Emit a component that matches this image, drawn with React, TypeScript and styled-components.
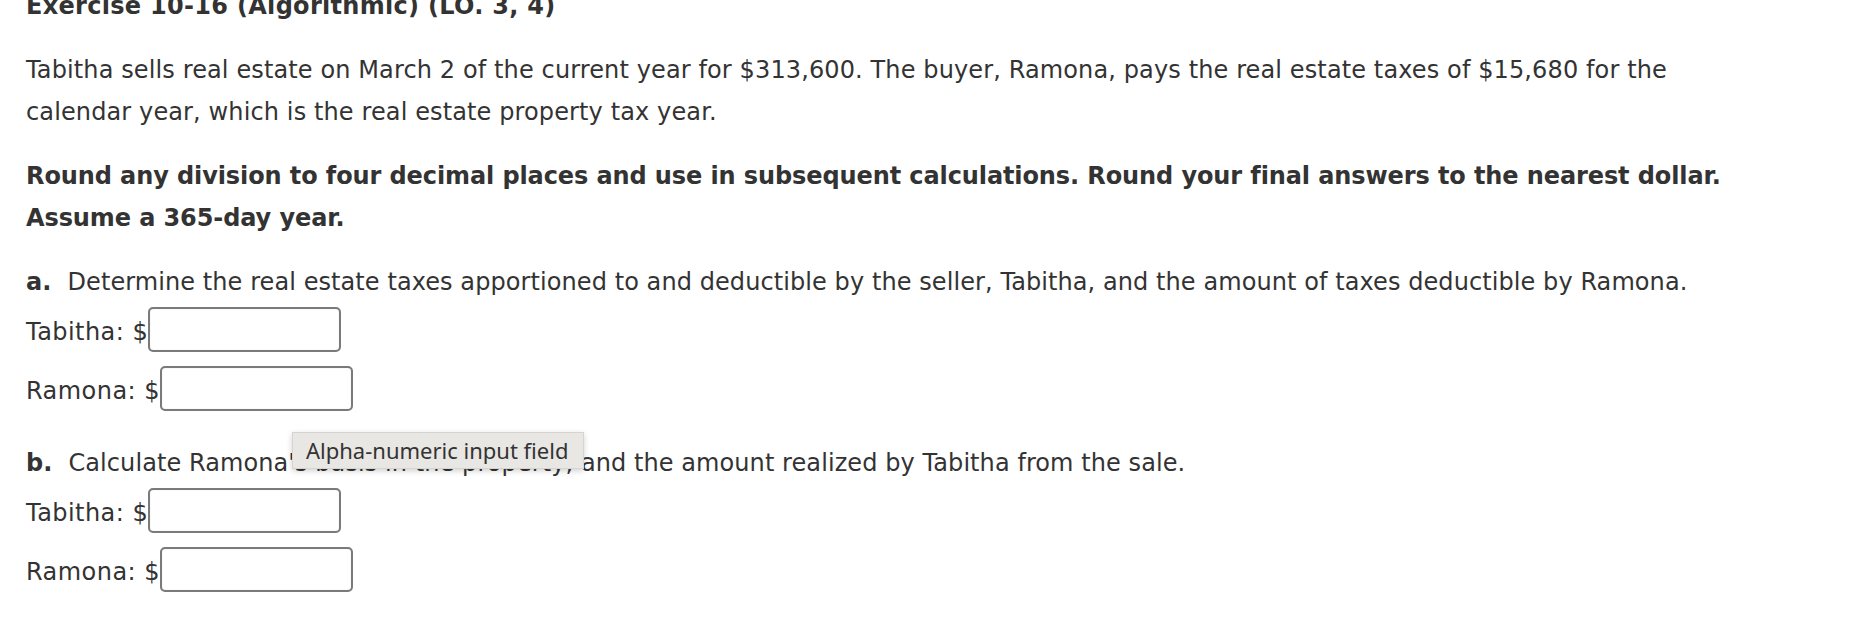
import React from 'react';
import styled, { createGlobalStyle } from 'styled-components';

const GlobalStyle = createGlobalStyle`
    html, body {
        margin: 0;
        padding: 0;
        background: #ffffff;
    }
    body {
        font-family: "DejaVu Sans", Verdana, sans-serif;
        color: #333333;
        overflow: hidden;
    }
`;

const Page = styled.div`
    padding: 0 0 0 26px;
    font-size: 24px;
    line-height: 42px;
    letter-spacing: 0.08px;
`;

const Heading = styled.h2`
    margin: -15px 0 22px 0;
    font-size: 24px;
    font-weight: bold;
    line-height: 42px;
    letter-spacing: 0.3px;
`;

const Paragraph = styled.p<{ $bold?: boolean }>`
    margin: 0 0 22px 0;
    font-weight: ${props => (props.$bold ? 'bold' : 'normal')};
    letter-spacing: ${props => (props.$bold ? '-0.1px' : '0.12px')};
`;

const Part = styled.div`
    position: relative;
    margin-bottom: 31px;
`;

const Question = styled.div`
    margin: 0;
`;

const PartLabel = styled.b`
    margin-right: 16px;
`;

const AnswerRow = styled.div<{ $first?: boolean }>`
    display: flex;
    align-items: center;
    height: 45px;
    margin-top: ${props => (props.$first ? '4px' : '14px')};
    line-height: 28px;
`;

const AnswerLabel = styled.span`
    padding-top: 4px;
    white-space: pre;
    letter-spacing: 0.45px;
`;

const AnswerInput = styled.input`
    width: 193px;
    height: 45px;
    box-sizing: border-box;
    margin: 0;
    border: 2px solid #7a7a7a;
    border-radius: 5px;
    background: #ffffff;
    box-shadow: inset 0 0 1px rgba(0, 0, 0, 0.25);
    font-family: inherit;
    font-size: 20px;
    outline: none;
`;

const Tooltip = styled.div`
    position: absolute;
    left: 266px;
    top: -10px;
    width: 292px;
    height: 37px;
    box-sizing: border-box;
    padding: 0 13px;
    background: #e9e7e3;
    border: 1px solid #d6d4d0;
    box-shadow: 0 2px 6px rgba(0, 0, 0, 0.18);
    font-family: "Noto Sans", "Open Sans", sans-serif;
    font-size: 22px;
    line-height: 34px;
    letter-spacing: 0;
    color: #333333;
    white-space: nowrap;
`;

const parts = [
    {
        key: 'a',
        text: 'Determine the real estate taxes apportioned to and deductible by the seller, Tabitha, and the amount of taxes deductible by Ramona.',
    },
    {
        key: 'b',
        text: "Calculate Ramona's basis in the property, and the amount realized by Tabitha from the sale.",
    },
];

const App = function () {
    return <>
        <GlobalStyle />
        <Page>
            <Heading>Exercise 10-16 (Algorithmic) (LO. 3, 4)</Heading>
            <Paragraph>
                Tabitha sells real estate on March 2 of the current year for $313,600. The buyer, Ramona, pays the real estate taxes of $15,680 for the
                <br />
                calendar year, which is the real estate property tax year.
            </Paragraph>
            <Paragraph $bold>
                Round any division to four decimal places and use in subsequent calculations. Round your final answers to the nearest dollar.
                <br />
                Assume a 365-day year.
            </Paragraph>
            {parts.map(part => (
                <Part key={`${part.key}-part`}>
                    <Question>
                        <PartLabel>{part.key}.</PartLabel>
                        {part.text}
                    </Question>
                    <AnswerRow $first>
                        <AnswerLabel>Tabitha: $</AnswerLabel>
                        <AnswerInput type="text" aria-label="Tabitha" />
                    </AnswerRow>
                    <AnswerRow>
                        <AnswerLabel>Ramona: $</AnswerLabel>
                        <AnswerInput type="text" aria-label="Ramona" />
                    </AnswerRow>
                    {part.key === 'b' && <Tooltip>Alpha-numeric input field</Tooltip>}
                </Part>
            ))}
        </Page>
    </>;
};

export default App;
